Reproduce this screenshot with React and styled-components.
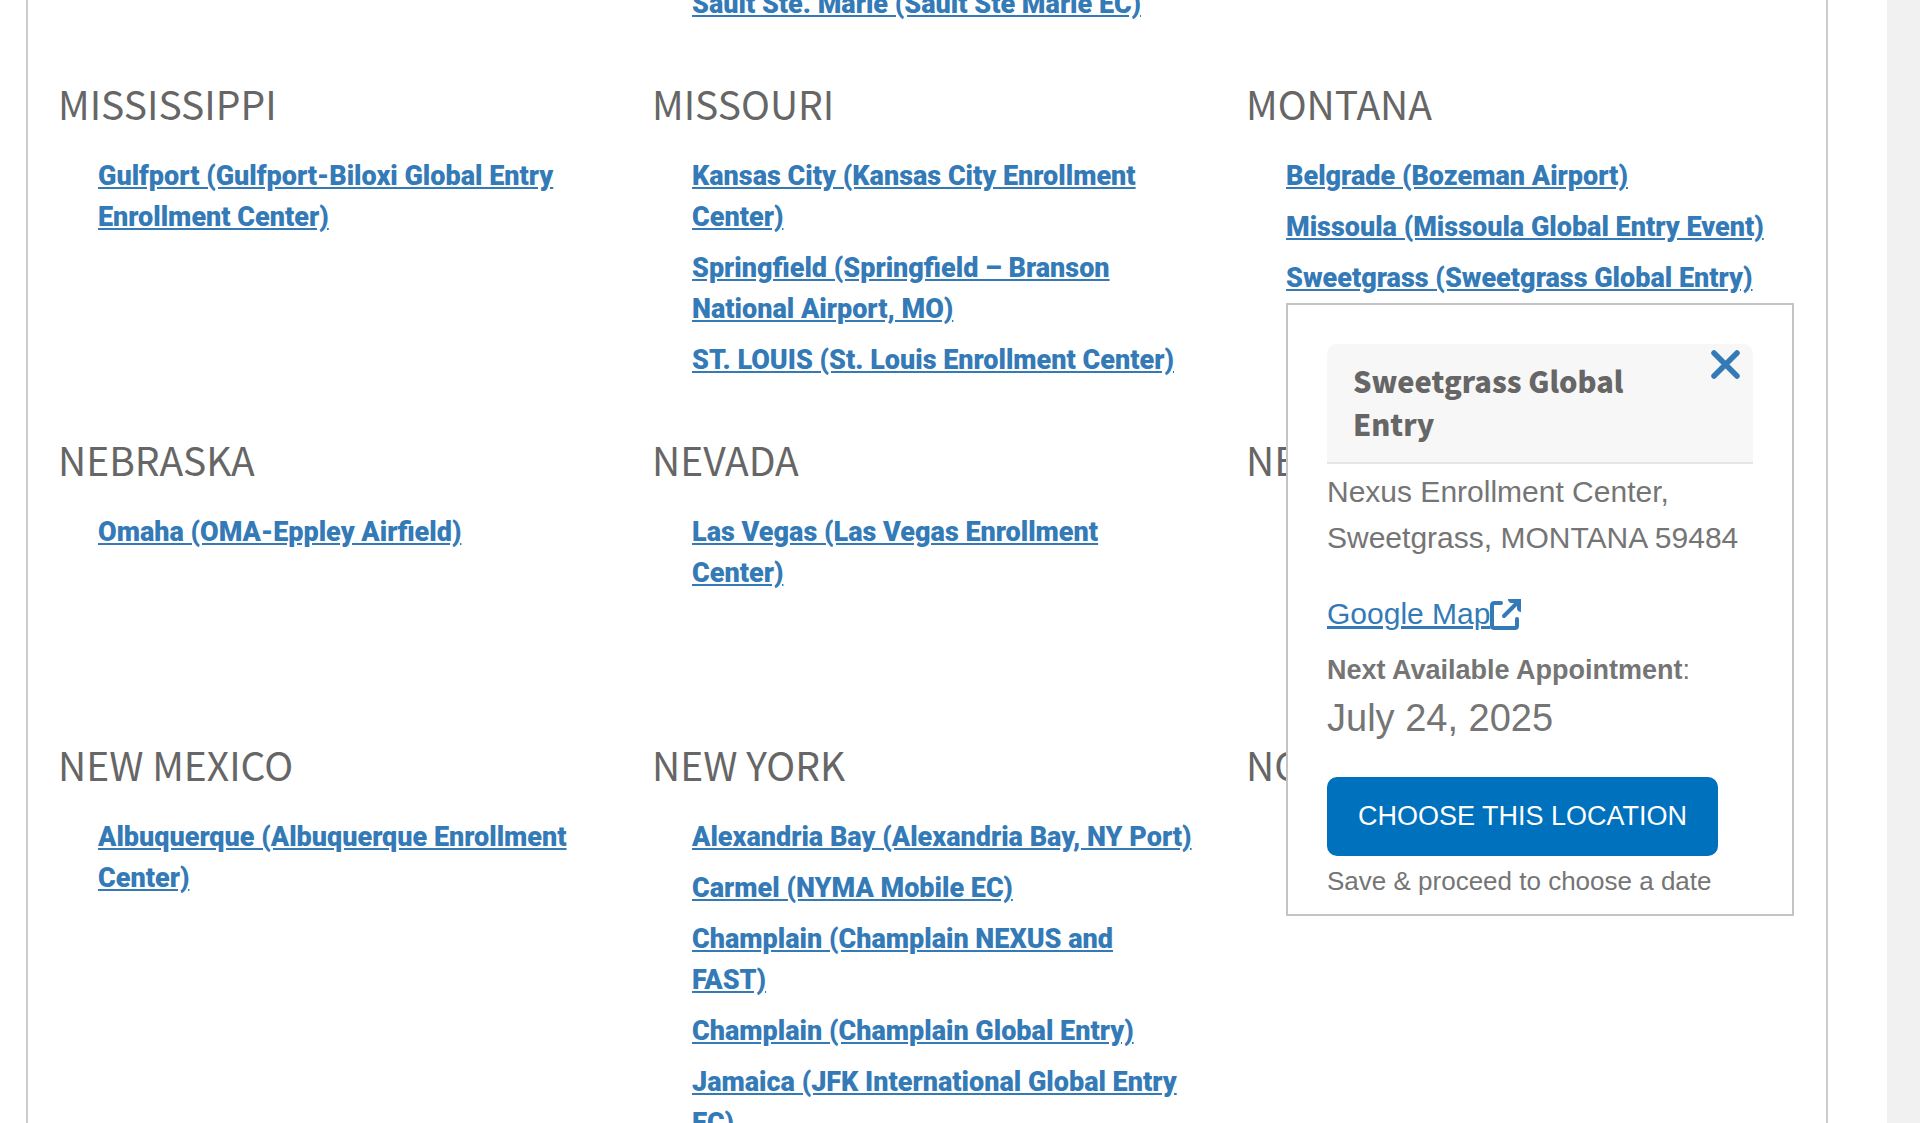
import React, { useState } from "react";
import styled, { createGlobalStyle } from "styled-components";

const GlobalStyle = createGlobalStyle`
  *, *::before, *::after { box-sizing: border-box; }
  body {
    margin: 0;
    background: #f1f1f1;
    color: #757575;
    font-family: "Liberation Sans", Arial, sans-serif;
  }
`;

const headingFont = `"Noto Sans CJK SC", "Open Sans", sans-serif`;

const Page = styled.main`
  height: 100vh;
  margin-right: 33px;
  padding: 0 59px 0 26px;
  overflow: hidden;
  background: #fff;
`;

const Frame = styled.div`
  min-height: 100%;
  margin-top: -16px;
  padding: 0 9px 0 7px;
  border: solid #ccc;
  border-width: 0 2px;
`;

const StateGrid = styled.div`
  display: grid;
  grid-template-columns: repeat(3, minmax(0, 1fr));
  grid-template-rows: auto;
  grid-auto-rows: minmax(305px, auto);
`;

const StateCell = styled.section`
  padding: 0 30px 0 23px;
`;

const StateName = styled.h2`
  margin: 0 0 29px;
  color: #666;
  font: 400 39px/48px ${headingFont};
`;

const LocationList = styled.ul`
  margin: 0;
  padding: 0 0 44px 40px;
  list-style: none;
`;

const LocationItem = styled.li`
  position: relative;
  margin-bottom: 10px;
`;

const LocationLink = styled.a`
  color: #337ab7;
  font: 900 27px/41px Roboto, sans-serif;
  text-decoration: underline;
`;

const Popup = styled.div`
  position: absolute;
  z-index: 1;
  top: 100%;
  left: 0;
  right: -7px;
  margin-top: 4px;
  padding: 39px 39px 15px;
  border: 2px solid #c4c4c4;
  background: #fff;
`;

const PopupHeader = styled.header`
  display: flex;
  align-items: flex-start;
  padding: 0 13px 0 26px;
  border-bottom: 2px solid #e6e6e6;
  border-radius: 10px 10px 0 0;
  background: #f7f7f7;
`;

const PopupTitle = styled.h3`
  flex: 1;
  margin: 0;
  padding: 15px 60px 17px 0;
  color: #666;
  font: 900 29px/43px ${headingFont};
`;

const CloseButton = styled.button`
  display: flex;
  margin: 6px 0 0;
  padding: 0;
  border: 0;
  background: none;
  color: #337ab7;
  cursor: pointer;
`;

const Address = styled.p`
  margin: 5px 0 30px;
  font-size: 30px;
  line-height: 46px;
`;

const MapLink = styled.a`
  display: flex;
  align-items: center;
  margin-bottom: 13px;
  color: #337ab7;
  font-size: 30px;
  line-height: 46px;
`;

const NextLabel = styled.div`
  font-size: 27px;
  line-height: 40px;
`;

const NextDate = styled.div`
  margin-bottom: 31px;
  font-size: 38px;
  line-height: 56px;
`;

const ChooseButton = styled.button`
  display: block;
  padding: 0 31px;
  border: 0;
  border-radius: 10px;
  background: #0071bc;
  color: #fff;
  font: 400 27px/79px "Liberation Sans", Arial, sans-serif;
  cursor: pointer;
`;

const Hint = styled.p`
  margin: 7px 0 0;
  font-size: 26px;
  line-height: 36px;
`;

const states = [
  { id: "before" },
  { id: "michigan", locations: ["Sault Ste. Marie (Sault Ste Marie EC)"] },
  { id: "after" },
  { id: "ms", name: "MISSISSIPPI", locations: ["Gulfport (Gulfport-Biloxi Global Entry Enrollment Center)"] },
  {
    id: "mo",
    name: "MISSOURI",
    locations: [
      "Kansas City (Kansas City Enrollment Center)",
      "Springfield (Springfield – Branson National Airport, MO)",
      "ST. LOUIS (St. Louis Enrollment Center)",
    ],
  },
  {
    id: "mt",
    name: "MONTANA",
    locations: [
      "Belgrade (Bozeman Airport)",
      "Missoula (Missoula Global Entry Event)",
      "Sweetgrass (Sweetgrass Global Entry)",
    ],
  },
  { id: "ne", name: "NEBRASKA", locations: ["Omaha (OMA-Eppley Airfield)"] },
  { id: "nv", name: "NEVADA", locations: ["Las Vegas (Las Vegas Enrollment Center)"] },
  { id: "nj", name: "NEW JERSEY" },
  { id: "nm", name: "NEW MEXICO", locations: ["Albuquerque (Albuquerque Enrollment Center)"] },
  {
    id: "ny",
    name: "NEW YORK",
    locations: [
      "Alexandria Bay (Alexandria Bay, NY Port)",
      "Carmel (NYMA Mobile EC)",
      "Champlain (Champlain NEXUS and FAST)",
      "Champlain (Champlain Global Entry)",
      "Jamaica (JFK International Global Entry EC)",
    ],
  },
  { id: "nc", name: "NORTH CAROLINA" },
];

function CloseIcon() {
  return (
    <svg width="29" height="29" viewBox="0 0 29 29" fill="none" stroke="currentColor" strokeWidth="5.5" strokeLinecap="round" aria-hidden="true">
      <path d="M3 3 26 26M26 3 3 26" />
    </svg>
  );
}

function ExternalIcon() {
  return (
    <svg width="31" height="31" viewBox="0 0 31 31" fill="none" stroke="currentColor" strokeWidth="4" strokeLinecap="round" aria-hidden="true">
      <path d="M11 4H4.500Q2 4 2 6.500V26.500Q2 29 4.500 29H25Q27 29 27 26.500V20" />
      <path d="M14 17 27 4" />
      <path d="M18 0h13v13q-3 0-4-3V4h-6q-3-1-3-4Z" fill="currentColor" stroke="none" />
    </svg>
  );
}

function LocationPopup({ onClose }) {
  return (
    <Popup role="dialog" aria-labelledby="popup-title">
      <PopupHeader>
        <PopupTitle id="popup-title">Sweetgrass Global Entry</PopupTitle>
        <CloseButton type="button" aria-label="Close" onClick={onClose}>
          <CloseIcon />
        </CloseButton>
      </PopupHeader>
      <Address>
        Nexus Enrollment Center,
        <br />
        Sweetgrass, MONTANA 59484
      </Address>
      <MapLink href="#map">
        Google Map
        <ExternalIcon />
      </MapLink>
      <NextLabel>
        <strong>Next Available Appointment</strong>:
      </NextLabel>
      <NextDate>July 24, 2025</NextDate>
      <ChooseButton type="button">CHOOSE THIS LOCATION</ChooseButton>
      <Hint>Save &amp; proceed to choose a date</Hint>
    </Popup>
  );
}

export default function App() {
  const [openLocation, setOpenLocation] = useState("Sweetgrass (Sweetgrass Global Entry)");

  return (
    <>
      <GlobalStyle />
      <Page>
        <Frame>
          <StateGrid>
            {states.map(({ id, name, locations = [] }) => (
              <StateCell key={id}>
                {name && <StateName>{name}</StateName>}
                <LocationList>
                  {locations.map((location) => (
                    <LocationItem key={location}>
                      <LocationLink href="#location">{location}</LocationLink>
                      {location === openLocation && <LocationPopup onClose={() => setOpenLocation(null)} />}
                    </LocationItem>
                  ))}
                </LocationList>
              </StateCell>
            ))}
          </StateGrid>
        </Frame>
      </Page>
    </>
  );
}
